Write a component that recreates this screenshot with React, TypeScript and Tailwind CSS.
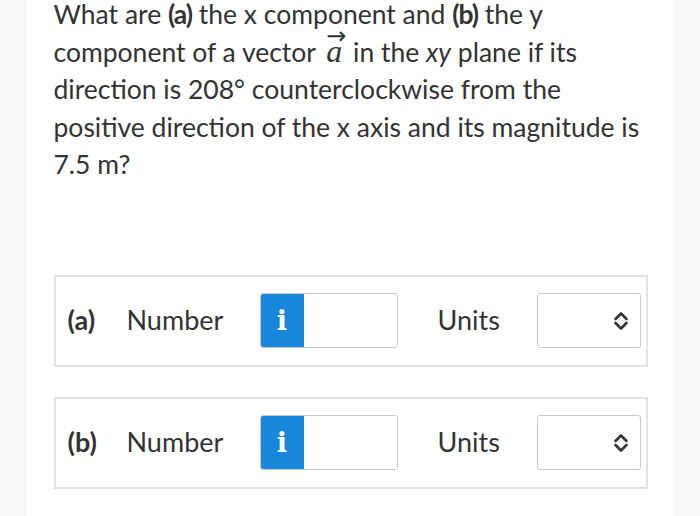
const font = { fontFamily: "Lato, 'Open Sans', sans-serif" };

function InfoInput() {
  return (
    <div className="flex h-[55px] w-[138px] overflow-hidden rounded-[3px] border-[1.5px] border-[#c9c9c9]">
      <div className="flex w-[43px] shrink-0 items-center justify-center bg-[#1787db]">
        <span
          className="text-[27px] font-bold leading-none text-white"
          style={{ fontFamily: "'DejaVu Serif', serif" }}
        >
          i
        </span>
      </div>
      <div className="flex-1 bg-white" />
    </div>
  );
}

function UnitSelect() {
  return (
    <div className="flex h-[55px] w-[104px] items-center justify-end rounded-[3px] border-[1.5px] border-[#c9c9c9] bg-white pr-[10px]">
      <svg width="18" height="22" viewBox="0 0 18 22" fill="none" stroke="#333" strokeWidth="2.6" strokeLinecap="round" strokeLinejoin="round">
        <path d="M3.5 9 L9 3.5 L14.5 9" />
        <path d="M3.5 13 L9 18.5 L14.5 13" />
      </svg>
    </div>
  );
}

function AnswerRow({ part }: { part: string }) {
  return (
    <div className="flex h-[92px] items-center border-2 border-[#e2e2e2] bg-white pl-[12px] text-[27px] text-[#333]">
      <span className="w-[59px] font-bold">({part})</span>
      <span className="w-[133px]">Number</span>
      <InfoInput />
      <span className="ml-[40px] w-[99px]">Units</span>
      <UnitSelect />
    </div>
  );
}

export default function App() {
  return (
    <div className="flex h-[516px] w-[700px] justify-center overflow-hidden bg-[#f8f8f8]" style={font}>
      <div className="h-full w-[647px] bg-white pl-[27px] pr-[20px]">
        <p className="-mt-[4px] text-[26.5px] leading-[37.5px] text-[#333]">
          What are <b className="tracking-[-1px]">(a)</b> the x component and <b className="tracking-[-1px]">(b)</b> the y
          <br />
          component of a vector{" "}
          <span className="relative mx-[4px] inline-block">
            <span className="text-[32px] italic leading-none" style={{ fontFamily: "'Liberation Serif', serif" }}>
              a
            </span>
            <span
              className="absolute left-[0px] top-[-10px] text-[24px] leading-none"
              style={{ fontFamily: "'DejaVu Sans', sans-serif" }}
            >
              →
            </span>
          </span>{" "}
          in the <i>xy</i> plane if its
          <br />
          direction is 208° counterclockwise from the
          <br />
          positive direction of the x axis and its magnitude is
          <br />
          7.5 m?
        </p>
        <div className="mt-[91px] mr-[6px] flex flex-col gap-[30px]">
          <AnswerRow part="a" />
          <AnswerRow part="b" />
        </div>
      </div>
    </div>
  );
}
